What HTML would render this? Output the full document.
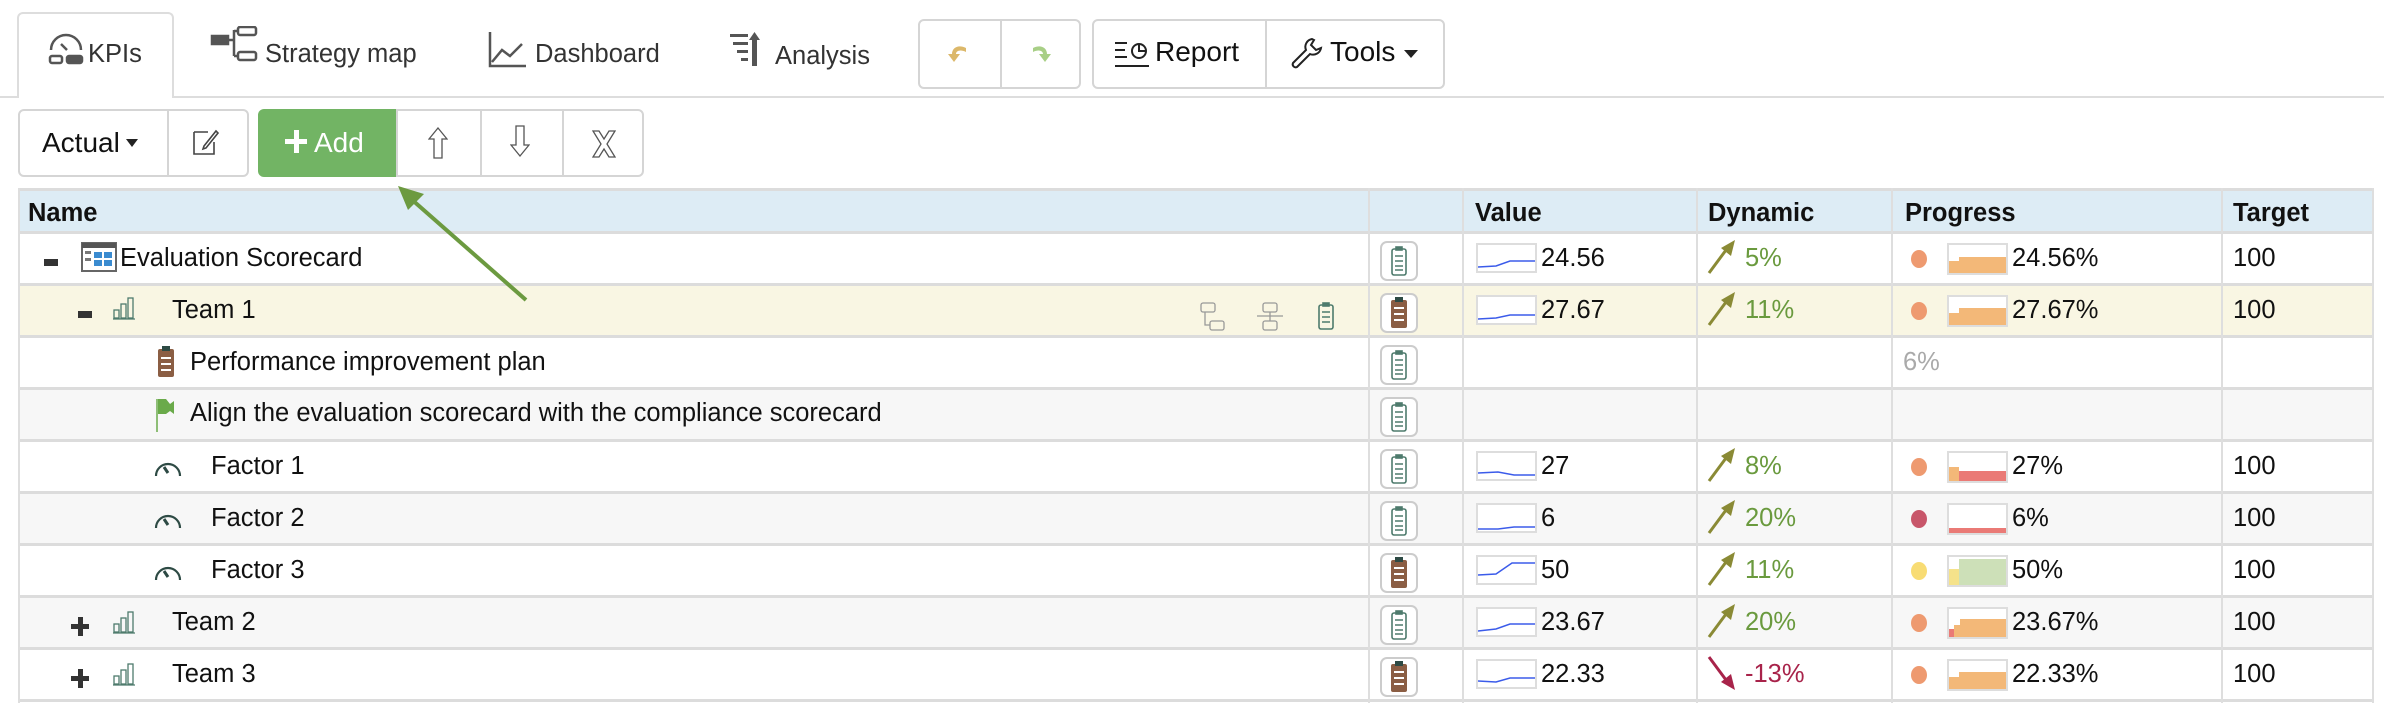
<!DOCTYPE html>
<html><head><meta charset="utf-8"><style>
*{box-sizing:border-box;margin:0;padding:0}
body{width:2384px;height:722px;background:#fff;font-family:"Liberation Sans",Arial,sans-serif;color:#111;position:relative;overflow:hidden}
.a{position:absolute}
.t{font-size:25.5px;white-space:nowrap}
.btn{position:absolute;border:2px solid #d5d5d5;border-radius:6px;background:#fff}
.vd{position:absolute;top:0;bottom:0;width:2px;background:#d5d5d5}
.row{position:absolute;left:18px;width:2356px;height:52px;border-bottom:3px solid #dcdcdc}
.cb{position:absolute;left:1380px;width:38px;height:40px;border:2px solid #ccc;border-radius:7px;background:#fff}
.sp{position:absolute;width:61px;height:30px;border:2px solid #ddd;background:#fff}
.pc{position:absolute;width:61px;height:32px;border:2px solid #ddd;background:#fff;overflow:hidden}
.dot{position:absolute;width:16px;height:18px;border-radius:50%}
.g{color:#6a9a3e}
</style></head><body>

<!-- tabs -->
<div class="a" style="left:0;top:96px;width:2384px;height:2px;background:#ddd"></div>
<div class="a" style="left:17px;top:12px;width:157px;height:86px;border:2px solid #ddd;border-bottom:none;border-radius:6px 6px 0 0;background:#fff"></div>
<svg class="a" style="left:48px;top:32px" width="36" height="34" viewBox="0 0 36 34" fill="none" stroke="#555" stroke-width="2.5"><path d="M3 18 A15 15 0 0 1 33 18"/><path d="M13 12 L19 18"/><rect x="2" y="24" width="12" height="7" rx="2"/><rect x="19" y="24" width="15" height="7" rx="2" fill="#555"/></svg>
<div class="a t" style="left:88px;top:40px;color:#333">KPIs</div>
<svg class="a" style="left:210px;top:26px" width="50" height="36" viewBox="0 0 50 36" fill="none" stroke="#555" stroke-width="2.5"><rect x="2" y="10" width="16" height="8" fill="#555"/><path d="M18 14 H24 M24 4 V30 M24 5 H28 M24 30 H28"/><rect x="28" y="1" width="18" height="8" rx="2"/><rect x="28" y="26" width="18" height="8" rx="2"/></svg>
<div class="a t" style="left:265px;top:40px;color:#333">Strategy map</div>
<svg class="a" style="left:488px;top:32px" width="40" height="36" viewBox="0 0 40 36" fill="none" stroke="#555" stroke-width="2.5"><path d="M2 0 V34 H38 M4 30 L14 18 L22 24 L34 12"/></svg>
<div class="a t" style="left:535px;top:40px;color:#333">Dashboard</div>
<svg class="a" style="left:730px;top:32px" width="40" height="36" viewBox="0 0 40 36" fill="#555"><rect x="0" y="2" width="18" height="3"/><rect x="3" y="10" width="15" height="3"/><rect x="7" y="18" width="11" height="3"/><rect x="11" y="26" width="7" height="3"/><rect x="22" y="6" width="5" height="28"/><path d="M19 8 L24.5 0 L30 8Z"/></svg>
<div class="a t" style="left:775px;top:42px;color:#333">Analysis</div>

<div class="btn" style="left:918px;top:19px;width:163px;height:70px"><div class="vd" style="left:80px"></div></div>
<svg class="a" style="left:946px;top:42px" width="22" height="22" viewBox="0 0 22 22"><path d="M20 6 C12 2 6 6 6 12 L2 12 L8 20 L14 12 L10 12 C10 9 14 7 20 10Z" fill="#dcb86a"/></svg>
<svg class="a" style="left:1031px;top:42px" width="22" height="22" viewBox="0 0 22 22"><path d="M2 6 C10 2 16 6 16 12 L20 12 L14 20 L8 12 L12 12 C12 9 8 7 2 10Z" fill="#a8cf86"/></svg>
<div class="btn" style="left:1092px;top:19px;width:353px;height:70px"><div class="vd" style="left:171px"></div></div>
<svg class="a" style="left:1115px;top:40px" width="36" height="28" viewBox="0 0 36 28" fill="none" stroke="#222" stroke-width="2"><path d="M0 3 H12 M0 10 H10 M0 17 H12 M0 26 H34"/><circle cx="24" cy="11" r="7"/><path d="M24 4 V11 H31"/></svg>
<div class="a t" style="left:1155px;top:36px;font-size:28px">Report</div>
<svg class="a" style="left:1290px;top:36px" width="34" height="34" viewBox="0 0 34 34" fill="none" stroke="#222" stroke-width="2"><path d="M22 3 A8 8 0 0 0 16 14 L3 27 A3 3 0 0 0 7 31 L20 18 A8 8 0 0 0 31 12 L26 14 L21 9 L24 4Z"/></svg>
<div class="a t" style="left:1330px;top:36px;font-size:28px">Tools</div>
<div class="a" style="left:1404px;top:50px;border:7px solid transparent;border-top:8px solid #222"></div>

<!-- toolbar 2 -->
<div class="btn" style="left:18px;top:109px;width:231px;height:68px"><div class="vd" style="left:147px"></div></div>
<div class="a t" style="left:42px;top:127px;font-size:28px">Actual</div>
<div class="a" style="left:126px;top:139px;border:6px solid transparent;border-top:8px solid #222"></div>
<svg class="a" style="left:192px;top:128px" width="28" height="28" viewBox="0 0 28 28" fill="none" stroke="#444" stroke-width="1.6"><path d="M2 4 H16 M2 4 V26 H22 V14"/><path d="M12 18 L24 3 L26 5 L14 20 L11 21Z"/></svg>
<div class="a" style="left:258px;top:109px;width:140px;height:68px;background:#72b464;border-radius:6px 0 0 6px"></div>
<div class="a" style="left:285px;top:139px;width:22px;height:5px;background:#fff"></div>
<div class="a" style="left:294px;top:130px;width:5px;height:23px;background:#fff"></div>
<div class="a t" style="left:314px;top:127px;font-size:28px;color:#fff">Add</div>
<div class="btn" style="left:396px;top:109px;width:248px;height:68px;border-radius:0 6px 6px 0"><div class="vd" style="left:82px"></div><div class="vd" style="left:164px"></div></div>
<svg class="a" style="left:428px;top:127px" width="20" height="32" viewBox="0 0 20 32" fill="#fff" stroke="#555" stroke-width="1.3"><path d="M10 1 L19 12 L14 12 L14 31 L6 31 L6 12 L1 12Z"/></svg>
<svg class="a" style="left:510px;top:125px" width="20" height="32" viewBox="0 0 20 32" fill="#fff" stroke="#555" stroke-width="1.3"><path d="M10 31 L19 20 L14 20 L14 1 L6 1 L6 20 L1 20Z"/></svg>
<svg class="a" style="left:592px;top:130px" width="24" height="28" viewBox="0 0 24 28" fill="#fff" stroke="#555" stroke-width="1.3"><path d="M1 1 L7 1 L12 9 L17 1 L23 1 L15 14 L23 27 L17 27 L12 19 L7 27 L1 27 L9 14Z"/></svg>

<!-- table -->
<div class="a" style="left:18px;top:188px;width:2356px;height:46px;background:#ddecf5;border-top:3px solid #dcdcdc;border-bottom:3px solid #dcdcdc"></div>
<div class="a t" style="left:28px;top:199px;font-weight:bold">Name</div>
<div class="a t" style="left:1475px;top:199px;font-weight:bold">Value</div>
<div class="a t" style="left:1708px;top:199px;font-weight:bold">Dynamic</div>
<div class="a t" style="left:1905px;top:199px;font-weight:bold">Progress</div>
<div class="a t" style="left:2233px;top:199px;font-weight:bold">Target</div>

<div class="row" style="top:234px;background:#fff"></div>
<div class="row" style="top:286px;background:#f9f6e3"></div>
<div class="row" style="top:338px;background:#fff"></div>
<div class="row" style="top:390px;background:#f7f7f7"></div>
<div class="row" style="top:442px;background:#fff"></div>
<div class="row" style="top:494px;background:#f7f7f7"></div>
<div class="row" style="top:546px;background:#fff"></div>
<div class="row" style="top:598px;background:#f7f7f7"></div>
<div class="row" style="top:650px;background:#fff"></div>
<div class="a" style="left:18px;top:188px;width:2px;height:515px;background:#dedede"></div>
<div class="a" style="left:2372px;top:188px;width:2px;height:515px;background:#dedede"></div>
<div class="a" style="left:1368px;top:188px;width:2px;height:515px;background:#dedede"></div>
<div class="a" style="left:1462px;top:188px;width:2px;height:515px;background:#dedede"></div>
<div class="a" style="left:1696px;top:188px;width:2px;height:515px;background:#dedede"></div>
<div class="a" style="left:1891px;top:188px;width:2px;height:515px;background:#dedede"></div>
<div class="a" style="left:2221px;top:188px;width:2px;height:515px;background:#dedede"></div>

<!-- name column -->
<div class="a" style="left:44px;top:259px;width:14px;height:7px;background:#333"></div>
<svg class="a" style="left:81px;top:242px" width="36" height="30" viewBox="0 0 36 30"><rect x="1" y="1" width="34" height="28" fill="#fff" stroke="#666" stroke-width="2"/><rect x="1" y="1" width="34" height="5" fill="#555"/><rect x="4" y="9" width="6" height="3" fill="#777"/><rect x="4" y="16" width="6" height="3" fill="#777"/><rect x="13" y="10" width="8" height="6" fill="#3a8bd0"/><rect x="23" y="10" width="8" height="6" fill="#3a8bd0"/><rect x="13" y="18" width="8" height="6" fill="#3a8bd0"/><rect x="23" y="18" width="8" height="6" fill="#3a8bd0"/></svg>
<div class="a t" style="left:120px;top:244px">Evaluation Scorecard</div>

<div class="a" style="left:78px;top:311px;width:14px;height:7px;background:#333"></div>
<svg class="a" style="left:113px;top:296px" width="24" height="24" viewBox="0 0 24 24" fill="none" stroke="#4e7b6d" stroke-width="1.3"><rect x="1" y="14" width="5" height="8"/><rect x="8" y="8" width="5" height="14"/><rect x="15" y="2" width="5" height="20"/><path d="M0 23 H22"/></svg>
<div class="a t" style="left:172px;top:296px">Team 1</div>
<svg class="a" style="left:1200px;top:302px" width="30" height="30" viewBox="0 0 30 30" fill="none" stroke="#999" stroke-width="1.3"><rect x="1" y="1" width="14" height="9" rx="2"/><rect x="10" y="19" width="14" height="9" rx="2"/><path d="M5 10 V23 H10"/></svg>
<svg class="a" style="left:1255px;top:302px" width="30" height="30" viewBox="0 0 30 30" fill="none" stroke="#999" stroke-width="1.3"><rect x="8" y="1" width="14" height="9" rx="2"/><rect x="8" y="19" width="14" height="9" rx="2"/><path d="M15 10 V19 M2 14 H28"/></svg>
<svg class="a" style="left:1317px;top:302px" width="18" height="28" viewBox="0 0 18 28" fill="none" stroke="#4e7b6d" stroke-width="1.6"><rect x="2" y="3" width="14" height="24" rx="2"/><rect x="6" y="1" width="6" height="3" fill="#4e7b6d"/><path d="M5 10H13M5 15H13M5 20H13"/></svg>

<svg class="a" style="left:157px;top:346px" width="18" height="32" viewBox="0 0 18 32"><rect x="1" y="3" width="16" height="28" rx="2" fill="#8b5e44"/><rect x="5" y="0" width="8" height="5" fill="#2d4a44"/><path d="M4 12H14M4 18H14M4 24H14" stroke="#fff" stroke-width="2"/></svg>
<div class="a t" style="left:190px;top:348px">Performance improvement plan</div>

<svg class="a" style="left:156px;top:398px" width="20" height="34" viewBox="0 0 20 34"><path d="M1 1 V34" stroke="#6aaa4a" stroke-width="1.5"/><path d="M2 1 H10 L14 6 L18 3 V16 L14 13 L10 16 H2Z" fill="#6aaa4a"/></svg>
<div class="a t" style="left:190px;top:399px">Align the evaluation scorecard with the compliance scorecard</div>

<svg class="a" style="left:153px;top:456px" width="30" height="22" viewBox="0 0 30 22" fill="none" stroke="#2d4a44" stroke-width="2.2"><path d="M3 20 A12 12 0 0 1 27 20"/><path d="M11 11 L15 17" stroke-width="3"/></svg>
<div class="a t" style="left:211px;top:452px">Factor 1</div>
<svg class="a" style="left:153px;top:508px" width="30" height="22" viewBox="0 0 30 22" fill="none" stroke="#2d4a44" stroke-width="2.2"><path d="M3 20 A12 12 0 0 1 27 20"/><path d="M11 11 L15 17" stroke-width="3"/></svg>
<div class="a t" style="left:211px;top:504px">Factor 2</div>
<svg class="a" style="left:153px;top:560px" width="30" height="22" viewBox="0 0 30 22" fill="none" stroke="#2d4a44" stroke-width="2.2"><path d="M3 20 A12 12 0 0 1 27 20"/><path d="M11 11 L15 17" stroke-width="3"/></svg>
<div class="a t" style="left:211px;top:556px">Factor 3</div>

<div class="a" style="left:71px;top:624px;width:18px;height:5px;background:#333"></div><div class="a" style="left:78px;top:617px;width:5px;height:19px;background:#333"></div>
<svg class="a" style="left:113px;top:610px" width="24" height="24" viewBox="0 0 24 24" fill="none" stroke="#4e7b6d" stroke-width="1.3"><rect x="1" y="14" width="5" height="8"/><rect x="8" y="8" width="5" height="14"/><rect x="15" y="2" width="5" height="20"/><path d="M0 23 H22"/></svg>
<div class="a t" style="left:172px;top:608px">Team 2</div>
<div class="a" style="left:71px;top:676px;width:18px;height:5px;background:#333"></div><div class="a" style="left:78px;top:669px;width:5px;height:19px;background:#333"></div>
<svg class="a" style="left:113px;top:662px" width="24" height="24" viewBox="0 0 24 24" fill="none" stroke="#4e7b6d" stroke-width="1.3"><rect x="1" y="14" width="5" height="8"/><rect x="8" y="8" width="5" height="14"/><rect x="15" y="2" width="5" height="20"/><path d="M0 23 H22"/></svg>
<div class="a t" style="left:172px;top:660px">Team 3</div>

<!-- clipboard buttons -->
<div class="cb" style="top:241px"><svg width="34" height="36" viewBox="0 0 34 36" fill="none" stroke="#4e7b6d" stroke-width="1.6"><rect x="10" y="6" width="14" height="26" rx="2"/><rect x="14" y="4" width="6" height="3" fill="#4e7b6d"/><path d="M13 13H21M13 18H21M13 23H21M13 27H21"/></svg></div>
<div class="cb" style="top:293px"><svg width="34" height="36" viewBox="0 0 34 36"><rect x="9" y="5" width="16" height="28" rx="2" fill="#8b5e44"/><rect x="13" y="2" width="8" height="5" fill="#2d4a44"/><path d="M12 13H22M12 19H22M12 25H22" stroke="#fff" stroke-width="2"/></svg></div>
<div class="cb" style="top:345px"><svg width="34" height="36" viewBox="0 0 34 36" fill="none" stroke="#4e7b6d" stroke-width="1.6"><rect x="10" y="6" width="14" height="26" rx="2"/><rect x="14" y="4" width="6" height="3" fill="#4e7b6d"/><path d="M13 13H21M13 18H21M13 23H21M13 27H21"/></svg></div>
<div class="cb" style="top:397px"><svg width="34" height="36" viewBox="0 0 34 36" fill="none" stroke="#4e7b6d" stroke-width="1.6"><rect x="10" y="6" width="14" height="26" rx="2"/><rect x="14" y="4" width="6" height="3" fill="#4e7b6d"/><path d="M13 13H21M13 18H21M13 23H21M13 27H21"/></svg></div>
<div class="cb" style="top:449px"><svg width="34" height="36" viewBox="0 0 34 36" fill="none" stroke="#4e7b6d" stroke-width="1.6"><rect x="10" y="6" width="14" height="26" rx="2"/><rect x="14" y="4" width="6" height="3" fill="#4e7b6d"/><path d="M13 13H21M13 18H21M13 23H21M13 27H21"/></svg></div>
<div class="cb" style="top:501px"><svg width="34" height="36" viewBox="0 0 34 36" fill="none" stroke="#4e7b6d" stroke-width="1.6"><rect x="10" y="6" width="14" height="26" rx="2"/><rect x="14" y="4" width="6" height="3" fill="#4e7b6d"/><path d="M13 13H21M13 18H21M13 23H21M13 27H21"/></svg></div>
<div class="cb" style="top:553px"><svg width="34" height="36" viewBox="0 0 34 36"><rect x="9" y="5" width="16" height="28" rx="2" fill="#8b5e44"/><rect x="13" y="2" width="8" height="5" fill="#2d4a44"/><path d="M12 13H22M12 19H22M12 25H22" stroke="#fff" stroke-width="2"/></svg></div>
<div class="cb" style="top:605px"><svg width="34" height="36" viewBox="0 0 34 36" fill="none" stroke="#4e7b6d" stroke-width="1.6"><rect x="10" y="6" width="14" height="26" rx="2"/><rect x="14" y="4" width="6" height="3" fill="#4e7b6d"/><path d="M13 13H21M13 18H21M13 23H21M13 27H21"/></svg></div>
<div class="cb" style="top:657px"><svg width="34" height="36" viewBox="0 0 34 36"><rect x="9" y="5" width="16" height="28" rx="2" fill="#8b5e44"/><rect x="13" y="2" width="8" height="5" fill="#2d4a44"/><path d="M12 13H22M12 19H22M12 25H22" stroke="#fff" stroke-width="2"/></svg></div>

<!-- value column -->
<div class="sp" style="left:1476px;top:243px"><svg width="57" height="26"><polyline points="0,22 18,21 32,16 57,16" fill="none" stroke="#3b5bea" stroke-width="1.5"/></svg></div>
<div class="a t" style="left:1541px;top:244px">24.56</div>
<div class="sp" style="left:1476px;top:295px"><svg width="57" height="26"><polyline points="0,22 18,21 32,18 57,18" fill="none" stroke="#3b5bea" stroke-width="1.5"/></svg></div>
<div class="a t" style="left:1541px;top:296px">27.67</div>
<div class="sp" style="left:1476px;top:451px"><svg width="57" height="26"><polyline points="0,20 20,19 36,22 57,22" fill="none" stroke="#3b5bea" stroke-width="1.5"/></svg></div>
<div class="a t" style="left:1541px;top:452px">27</div>
<div class="sp" style="left:1476px;top:503px"><svg width="57" height="26"><polyline points="0,24 20,24 36,22 57,22" fill="none" stroke="#3b5bea" stroke-width="1.5"/></svg></div>
<div class="a t" style="left:1541px;top:504px">6</div>
<div class="sp" style="left:1476px;top:555px"><svg width="57" height="26"><polyline points="0,18 18,17 34,6 57,6" fill="none" stroke="#3b5bea" stroke-width="1.5"/></svg></div>
<div class="a t" style="left:1541px;top:556px">50</div>
<div class="sp" style="left:1476px;top:607px"><svg width="57" height="26"><polyline points="0,22 18,20 32,15 57,15" fill="none" stroke="#3b5bea" stroke-width="1.5"/></svg></div>
<div class="a t" style="left:1541px;top:608px">23.67</div>
<div class="sp" style="left:1476px;top:659px"><svg width="57" height="26"><polyline points="0,20 18,21 32,17 57,17" fill="none" stroke="#3b5bea" stroke-width="1.5"/></svg></div>
<div class="a t" style="left:1541px;top:660px">22.33</div>

<!-- dynamic -->
<svg class="a" style="left:1707px;top:240px" width="30" height="34" viewBox="0 0 30 34"><path d="M2 33 L22 6" stroke="#8a8a35" stroke-width="3"/><path d="M14 8 L28 0 L24 16Z" fill="#8a8a35"/></svg><div class="a t g" style="left:1745px;top:244px">5%</div>
<svg class="a" style="left:1707px;top:292px" width="30" height="34" viewBox="0 0 30 34"><path d="M2 33 L22 6" stroke="#8a8a35" stroke-width="3"/><path d="M14 8 L28 0 L24 16Z" fill="#8a8a35"/></svg><div class="a t g" style="left:1745px;top:296px">11%</div>
<svg class="a" style="left:1707px;top:448px" width="30" height="34" viewBox="0 0 30 34"><path d="M2 33 L22 6" stroke="#8a8a35" stroke-width="3"/><path d="M14 8 L28 0 L24 16Z" fill="#8a8a35"/></svg><div class="a t g" style="left:1745px;top:452px">8%</div>
<svg class="a" style="left:1707px;top:500px" width="30" height="34" viewBox="0 0 30 34"><path d="M2 33 L22 6" stroke="#8a8a35" stroke-width="3"/><path d="M14 8 L28 0 L24 16Z" fill="#8a8a35"/></svg><div class="a t g" style="left:1745px;top:504px">20%</div>
<svg class="a" style="left:1707px;top:552px" width="30" height="34" viewBox="0 0 30 34"><path d="M2 33 L22 6" stroke="#8a8a35" stroke-width="3"/><path d="M14 8 L28 0 L24 16Z" fill="#8a8a35"/></svg><div class="a t g" style="left:1745px;top:556px">11%</div>
<svg class="a" style="left:1707px;top:604px" width="30" height="34" viewBox="0 0 30 34"><path d="M2 33 L22 6" stroke="#8a8a35" stroke-width="3"/><path d="M14 8 L28 0 L24 16Z" fill="#8a8a35"/></svg><div class="a t g" style="left:1745px;top:608px">20%</div>
<svg class="a" style="left:1707px;top:656px" width="30" height="34" viewBox="0 0 30 34"><path d="M2 1 L22 28" stroke="#a8234a" stroke-width="3"/><path d="M14 26 L28 34 L24 18Z" fill="#a8234a"/></svg><div class="a t" style="left:1745px;top:660px;color:#a8234a">-13%</div>

<!-- progress -->
<div class="dot" style="left:1911px;top:250px;background:#ee9a70"></div>
<div class="pc" style="left:1947px;top:243px"><div class="a" style="left:0;bottom:0;width:10px;height:12px;background:#f3b878"></div><div class="a" style="left:10px;bottom:0;width:51px;height:16px;background:#f3b878"></div></div>
<div class="a t" style="left:2012px;top:244px">24.56%</div>
<div class="dot" style="left:1911px;top:302px;background:#ee9a70"></div>
<div class="pc" style="left:1947px;top:295px"><div class="a" style="left:0;bottom:0;width:10px;height:12px;background:#f3b878"></div><div class="a" style="left:10px;bottom:0;width:51px;height:17px;background:#f3b878"></div></div>
<div class="a t" style="left:2012px;top:296px">27.67%</div>
<div class="a t" style="left:1903px;top:348px;color:#aaa">6%</div>
<div class="dot" style="left:1911px;top:458px;background:#ee9a70"></div>
<div class="pc" style="left:1947px;top:451px"><div class="a" style="left:0;bottom:0;width:10px;height:14px;background:#f3b878"></div><div class="a" style="left:10px;bottom:0;width:51px;height:10px;background:#ea7a76"></div></div>
<div class="a t" style="left:2012px;top:452px">27%</div>
<div class="dot" style="left:1911px;top:510px;background:#c8566a"></div>
<div class="pc" style="left:1947px;top:503px"><div class="a" style="left:0;bottom:0;width:61px;height:5px;background:#ea7a76"></div></div>
<div class="a t" style="left:2012px;top:504px">6%</div>
<div class="dot" style="left:1911px;top:562px;background:#f8dc74"></div>
<div class="pc" style="left:1947px;top:555px"><div class="a" style="left:0;bottom:0;width:10px;height:16px;background:#f5e28a"></div><div class="a" style="left:10px;bottom:0;width:51px;height:26px;background:#cde0b8"></div></div>
<div class="a t" style="left:2012px;top:556px">50%</div>
<div class="dot" style="left:1911px;top:614px;background:#ee9a70"></div>
<div class="pc" style="left:1947px;top:607px"><div class="a" style="left:0;bottom:0;width:5px;height:8px;background:#ea7a76"></div><div class="a" style="left:5px;bottom:0;width:6px;height:12px;background:#f3b878"></div><div class="a" style="left:11px;bottom:0;width:50px;height:18px;background:#f3b878"></div></div>
<div class="a t" style="left:2012px;top:608px">23.67%</div>
<div class="dot" style="left:1911px;top:666px;background:#ee9a70"></div>
<div class="pc" style="left:1947px;top:659px"><div class="a" style="left:0;bottom:0;width:10px;height:12px;background:#f3b878"></div><div class="a" style="left:10px;bottom:0;width:51px;height:17px;background:#f3b878"></div></div>
<div class="a t" style="left:2012px;top:660px">22.33%</div>

<!-- target -->
<div class="a t" style="left:2233px;top:244px">100</div>
<div class="a t" style="left:2233px;top:296px">100</div>
<div class="a t" style="left:2233px;top:452px">100</div>
<div class="a t" style="left:2233px;top:504px">100</div>
<div class="a t" style="left:2233px;top:556px">100</div>
<div class="a t" style="left:2233px;top:608px">100</div>
<div class="a t" style="left:2233px;top:660px">100</div>

<!-- green arrow -->
<svg class="a" style="left:390px;top:178px" width="150" height="130" viewBox="0 0 150 130"><path d="M136 122 L20 20" stroke="#6c9a40" stroke-width="4"/><path d="M8 8 L34 16 L18 32Z" fill="#6c9a40"/></svg>
</body></html>
